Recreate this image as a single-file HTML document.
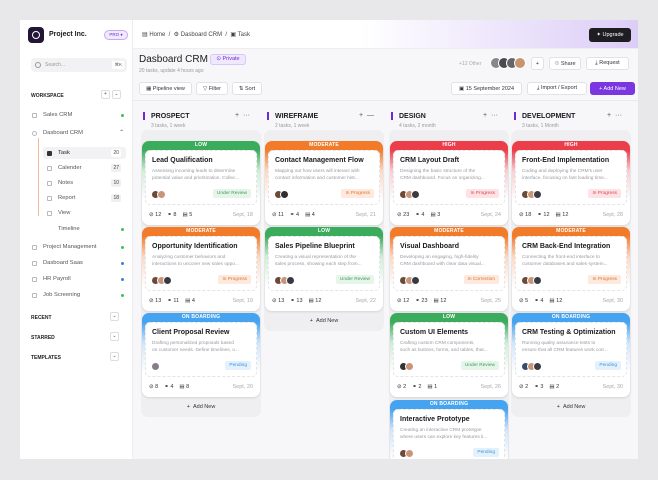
<!DOCTYPE html>
<html><head><meta charset="utf-8"><style>
*{box-sizing:border-box;margin:0;padding:0}
body{width:658px;height:480px;background:#e8e8eb;font-family:"Liberation Sans",sans-serif;position:relative;overflow:hidden;color:#1a1a1f}
.app{position:absolute;left:20px;top:20px;width:618px;height:439px;background:#fff;overflow:hidden}
.side{position:absolute;left:0;top:0;width:113px;height:439px;background:#fff;border-right:1px solid #ececef}
.main{position:absolute;left:113px;top:0;width:505px;height:439px;background:#f7f7f9}
.abs{position:absolute}
.logo{left:8px;top:7px;width:16px;height:16px;border-radius:4px;background:#231536}
.row{position:absolute;left:12px;font-size:5.8px;color:#55555e;display:flex;align-items:center;width:92px}
.row .ic{width:5px;height:5px;border:1px solid #b8b8c0;border-radius:1px;margin-right:6px}
.dot{position:absolute;right:0;width:3px;height:3px;border-radius:50%}
.cnt{position:absolute;right:0;background:#f0f0f2;border-radius:2px;font-size:5px;padding:1px 2px;color:#444}
.sec{position:absolute;left:11px;font-size:5px;font-weight:bold;color:#222}
.box{position:absolute;width:9px;height:9px;border:1px solid #ddd;border-radius:2px;background:#fff;font-size:5px;text-align:center;line-height:7px;color:#555}
.btn{position:absolute;height:13px;border:1px solid #e2e2e6;border-radius:3px;background:#fff;font-size:5.5px;color:#333;display:flex;align-items:center;justify-content:center;gap:3px}
.colh{position:absolute;top:92px;font-size:7px;font-weight:bold;display:flex;align-items:center}
.colh i{display:inline-block;width:2px;height:8px;background:#6b2bd6;margin-right:6px}
.cols{position:absolute;top:103px;font-size:5px;color:#999}
.ch{position:absolute;top:92px;font-size:7px;color:#555}
.card{position:absolute;width:118px;border-radius:7px;padding:0 3px 0;box-shadow:0 1px 2px rgba(0,0,0,.12)}
.card .lb{height:9px;font-size:5px;font-weight:bold;color:#fff;text-align:center;line-height:9px;letter-spacing:.2px}
.in{background:#fff;border-radius:5px;border:1px dashed #e4e4e8;padding:6px 6px 4px;height:55px;position:relative}
.in b{display:block;font-size:7px;margin-bottom:4px}
.in p{font-size:4.8px;color:#9a9aa2;line-height:7px;white-space:nowrap;overflow:hidden;text-overflow:ellipsis}
.av{position:absolute;left:5px;bottom:5px;display:flex}
.av span{width:9px;height:9px;border-radius:50%;border:1px solid #fff;margin-right:-3px;background:#6b4a3a}
.av span:nth-child(2){background:#c99478}.av span:nth-child(3){background:#3a3a44}
.pill{position:absolute;right:5px;bottom:6px;font-size:4.8px;padding:2px 4px;border-radius:2px}
.ur{background:#e6f5ea;color:#3d9a57}.ip{background:#fde9dd;color:#e5702a}.pd{background:#e3f1fd;color:#3b94e0}
.ft{display:flex;font-size:5.5px;color:#333;padding:0 4px;height:20px;align-items:center;background:#fff;gap:6px;border-radius:0 0 5px 5px}
.ft .d{margin-left:auto;color:#aaa}
.low{background:linear-gradient(#3bab5c 0,#3bab5c 9px,#cfeed8 30px,#fff 60px)}
.mod{background:linear-gradient(#f27b2a 0,#f27b2a 9px,#fcd9c2 30px,#fff 60px)}
.high{background:linear-gradient(#ec3d4b 0,#ec3d4b 9px,#f9cfd2 30px,#fff 60px)}
.onb{background:linear-gradient(#45a3ef 0,#45a3ef 9px,#cfe6fb 30px,#fff 60px)}
.add{position:absolute;font-size:5.5px;color:#333;width:118px;text-align:center}
</style></head><body>
<div class="app">
<div class="side">
 <div class="abs logo"><div style="position:absolute;left:4px;top:4px;width:8px;height:8px;border:1.5px solid #fff;border-radius:50%"></div></div>
 <div class="abs" style="left:29px;top:11px;font-size:7px;font-weight:bold">Project Inc.</div>
 <div class="abs" style="left:84px;top:10px;width:24px;height:10px;border:1px solid #c6a9f5;background:#f1e9fe;border-radius:5px;font-size:4.5px;color:#6b2bd6;text-align:center;line-height:8px">PRO ♦</div>
 <div class="abs" style="left:11px;top:38px;width:96px;height:14px;background:#f2f2f4;border-radius:4px;font-size:5px;color:#999;line-height:14px;padding-left:14px">Search...<span style="position:absolute;right:3px;top:3px;background:#fff;height:8px;line-height:8px;padding:0 2px;font-size:4.5px;color:#555">⌘K</span><span style="position:absolute;left:4px;top:4px;width:6px;height:6px;border:1px solid #999;border-radius:50%"></span></div>
 <div class="sec" style="top:73px">WORKSPACE</div>
 <div class="box" style="left:81px;top:70px">+</div><div class="box" style="left:92px;top:70px">⌄</div>
 <div class="row" style="top:92px"><span class="ic"></span>Sales CRM<span class="dot" style="background:#3bc35a"></span></div>
 <div class="row" style="top:110px"><span class="ic" style="border-radius:50%"></span>Dasboard CRM<span style="position:absolute;right:0">⌃</span></div>
 <div class="abs" style="left:18px;top:118px;width:1px;height:78px;background:#f0b99a"></div>
 <div class="abs" style="left:23px;top:127px;width:83px;height:12px;background:#f2f2f4;border-radius:3px"></div>
 <div class="row" style="top:130px;left:27px;width:74px;color:#222"><span class="ic" style="background:#333;border-color:#333"></span>Task<span class="cnt" style="top:-1px;background:#fff">20</span></div>
 <div class="row" style="top:145px;left:27px;width:74px"><span class="ic"></span>Calender<span class="cnt" style="top:-1px">27</span></div>
 <div class="row" style="top:160px;left:27px;width:74px"><span class="ic"></span>Notes<span class="cnt" style="top:-1px">10</span></div>
 <div class="row" style="top:175px;left:27px;width:74px"><span class="ic"></span>Report<span class="cnt" style="top:-1px">18</span></div>
 <div class="row" style="top:190px;left:27px;width:74px"><span class="ic"></span>View</div>
 <div class="row" style="top:206px;left:38px;width:66px">Timeline<span class="dot" style="background:#3bc35a"></span></div>
 <div class="row" style="top:224px"><span class="ic"></span>Project Management<span class="dot" style="background:#3bc35a"></span></div>
 <div class="row" style="top:240px"><span class="ic"></span>Dasboard Saas<span class="dot" style="background:#3b7fe0"></span></div>
 <div class="row" style="top:256px"><span class="ic"></span>HR Payroll<span class="dot" style="background:#3b7fe0"></span></div>
 <div class="row" style="top:272px"><span class="ic"></span>Job Screening<span class="dot" style="background:#3bc35a"></span></div>
 <div class="sec" style="top:295px">RECENT</div><div class="box" style="left:90px;top:292px">⌄</div>
 <div class="sec" style="top:315px">STARRED</div><div class="box" style="left:90px;top:312px">⌄</div>
 <div class="sec" style="top:335px">TEMPLATES</div><div class="box" style="left:90px;top:332px">⌄</div>
</div>
<div class="main">
 <div class="abs" style="left:0;top:0;width:505px;height:29px;background:linear-gradient(90deg,#fff 0,#fff 45%,#ece4fb 75%,#dccdf7 100%);border-bottom:1px solid #eee"></div>
 <div class="abs" style="left:9px;top:11px;font-size:6px;color:#444">▤ Home &nbsp;/&nbsp; ⚙ Dasboard CRM &nbsp;/&nbsp; ▣ Task</div>
 <div class="abs" style="left:456px;top:8px;width:42px;height:14px;background:#1d1d22;border-radius:3px;color:#fff;font-size:5.5px;text-align:center;line-height:14px">✦ Upgrade</div>
 <div class="abs" style="left:6px;top:34px;font-size:10px">Dasboard CRM</div>
 <div class="abs" style="left:77px;top:34px;width:36px;height:11px;background:#f0e8fd;border:1px solid #d9c6fa;border-radius:3px;color:#6b2bd6;font-size:5.5px;text-align:center;line-height:9px">⊙ Private</div>
 <div class="abs" style="left:6px;top:48px;font-size:5px;color:#999">20 tasks, update 4 hours ago</div>
 <div class="abs" style="left:326px;top:41px;font-size:5px;color:#aaa">+12 Other</div>
 <div class="abs" style="left:357px;top:37px;display:flex"><span style="width:12px;height:12px;border-radius:50%;background:#888;border:1px solid #fff"></span><span style="width:12px;height:12px;border-radius:50%;background:#4a4a52;border:1px solid #fff;margin-left:-4px"></span><span style="width:12px;height:12px;border-radius:50%;background:#666;border:1px solid #fff;margin-left:-4px"></span><span style="width:12px;height:12px;border-radius:50%;background:#c7966f;border:1px solid #fff;margin-left:-4px"></span></div>
 <div class="btn" style="left:398px;top:37px;width:13px">+</div>
 <div class="btn" style="left:416px;top:37px;width:32px">♲ Share</div>
 <div class="btn" style="left:453px;top:37px;width:43px">⤓ Request</div>
 <div class="btn" style="left:6px;top:62px;width:53px">▦ Pipeline view</div>
 <div class="btn" style="left:63px;top:62px;width:32px">▽ Filter</div>
 <div class="btn" style="left:99px;top:62px;width:30px">⇅ Sort</div>
 <div class="btn" style="left:318px;top:62px;width:71px">▣ 15 September 2024</div>
 <div class="btn" style="left:394px;top:62px;width:60px">⤓ Import / Export</div>
 <div class="btn" style="left:457px;top:62px;width:45px;background:#7a36e0;border-color:#7a36e0;color:#fff">+ Add New</div>
 <div class="btn" style="left:505px;top:62px;width:11px">⋮</div>
 <div class="abs" style="left:0;top:80px;width:505px;height:1px;background:#eaeaed"></div>
</div>
<div class="abs" style="left:121px;top:110px;width:120px;height:287px;background:#efeff2;border-radius:7px"></div>
<div class="abs" style="left:244px;top:110px;width:120px;height:201px;background:#efeff2;border-radius:7px"></div>
<div class="abs" style="left:369px;top:110px;width:120px;height:340px;background:#efeff2;border-radius:7px"></div>
<div class="abs" style="left:491px;top:110px;width:120px;height:287px;background:#efeff2;border-radius:7px"></div>

<div class="colh" style="left:123px"><i></i>PROSPECT</div><div class="ch" style="left:215px">+ &nbsp;···</div><div class="cols" style="left:131px">3 tasks, 1 week</div>
<div class="colh" style="left:247px"><i></i>WIREFRAME</div><div class="ch" style="left:339px">+ &nbsp;—</div><div class="cols" style="left:255px">2 tasks, 1 week</div>
<div class="colh" style="left:371px"><i></i>DESIGN</div><div class="ch" style="left:463px">+ &nbsp;···</div><div class="cols" style="left:379px">4 tasks, 2 month</div>
<div class="colh" style="left:494px"><i></i>DEVELOPMENT</div><div class="ch" style="left:587px">+ &nbsp;···</div><div class="cols" style="left:502px">3 tasks, 1 Month</div>

<div class="card low" style="left:122px;top:121px"><div class="lb">LOW</div><div class="in"><b>Lead Qualification</b><p>Assessing incoming leads to determine</p><p>potential value and prioritization. Collec...</p><div class="av"><span></span><span></span></div><div class="pill ur">Under Review</div></div><div class="ft">⊘ 12 <span>⚭ 8</span><span>▤ 5</span><span class="d">Sept, 18</span></div></div>
<div class="card mod" style="left:122px;top:207px"><div class="lb">MODERATE</div><div class="in"><b>Opportunity Identification</b><p>Analyzing customer behaviors and</p><p>interactions to uncover new sales oppo...</p><div class="av"><span></span><span></span><span></span></div><div class="pill ip">In Progress</div></div><div class="ft">⊘ 13 <span>⚭ 11</span><span>▤ 4</span><span class="d">Sept, 19</span></div></div>
<div class="card onb" style="left:122px;top:293px"><div class="lb">ON BOARDING</div><div class="in"><b>Client Proposal Review</b><p>Drafting personalized proposals based</p><p>on customer needs. Define timelines, o...</p><div class="av"><span style="background:#8a7b8a"></span></div><div class="pill pd">Pending</div></div><div class="ft">⊘ 8 <span>⚭ 4</span><span>▤ 8</span><span class="d">Sept, 20</span></div></div>
<div class="add" style="left:122px;top:384px">+ &nbsp;Add New</div>

<div class="card mod" style="left:245px;top:121px"><div class="lb">MODERATE</div><div class="in"><b>Contact Management Flow</b><p>Mapping out how users will interact with</p><p>contact information and customer hist...</p><div class="av"><span></span><span style="background:#2e2e33"></span></div><div class="pill ip">In Progress</div></div><div class="ft">⊘ 11 <span>⚭ 4</span><span>▤ 4</span><span class="d">Sept, 21</span></div></div>
<div class="card low" style="left:245px;top:207px"><div class="lb">LOW</div><div class="in"><b>Sales Pipeline Blueprint</b><p>Creating a visual representation of the</p><p>sales process, showing each step from...</p><div class="av"><span></span><span></span><span></span></div><div class="pill ur">Under Review</div></div><div class="ft">⊘ 13 <span>⚭ 13</span><span>▤ 12</span><span class="d">Sept, 22</span></div></div>
<div class="add" style="left:245px;top:298px">+ &nbsp;Add New</div>

<div class="card high" style="left:370px;top:121px"><div class="lb">HIGH</div><div class="in"><b>CRM Layout Draft</b><p>Designing the basic structure of the</p><p>CRM dashboard. Focus on organizing...</p><div class="av"><span></span><span></span><span></span></div><div class="pill ip" style="background:#fde3e5;color:#e0404d">In Progress</div></div><div class="ft">⊘ 23 <span>⚭ 4</span><span>▤ 3</span><span class="d">Sept, 24</span></div></div>
<div class="card mod" style="left:370px;top:207px"><div class="lb">MODERATE</div><div class="in"><b>Visual Dashboard</b><p>Developing an engaging, high-fidelity</p><p>CRM dashboard with clear data visual...</p><div class="av"><span></span><span></span><span></span></div><div class="pill ip">In Correction</div></div><div class="ft">⊘ 12 <span>⚭ 23</span><span>▤ 12</span><span class="d">Sept, 25</span></div></div>
<div class="card low" style="left:370px;top:293px"><div class="lb">LOW</div><div class="in"><b>Custom UI Elements</b><p>Crafting custom CRM components,</p><p>such as buttons, forms, and tables, that...</p><div class="av"><span style="background:#333"></span><span></span></div><div class="pill ur">Under Review</div></div><div class="ft">⊘ 2 <span>⚭ 2</span><span>▤ 1</span><span class="d">Sept, 26</span></div></div>
<div class="card onb" style="left:370px;top:380px"><div class="lb">ON BOARDING</div><div class="in"><b>Interactive Prototype</b><p>Creating an interactive CRM prototype</p><p>where users can explore key features li...</p><div class="av"><span></span><span></span></div><div class="pill pd">Pending</div></div></div>

<div class="card high" style="left:492px;top:121px"><div class="lb">HIGH</div><div class="in"><b>Front-End Implementation</b><p>Coding and deploying the CRM's user</p><p>interface, focusing on fast loading time...</p><div class="av"><span></span><span></span><span></span></div><div class="pill ip" style="background:#fde3e5;color:#e0404d">In Progress</div></div><div class="ft">⊘ 18 <span>⚭ 12</span><span>▤ 12</span><span class="d">Sept, 28</span></div></div>
<div class="card mod" style="left:492px;top:207px"><div class="lb">MODERATE</div><div class="in"><b>CRM Back-End Integration</b><p>Connecting the front-end interface to</p><p>customer databases and sales system...</p><div class="av"><span></span><span></span><span></span></div><div class="pill ip">In Progress</div></div><div class="ft">⊘ 5 <span>⚭ 4</span><span>▤ 12</span><span class="d">Sept, 30</span></div></div>
<div class="card onb" style="left:492px;top:293px"><div class="lb">ON BOARDING</div><div class="in"><b>CRM Testing &amp; Optimization</b><p>Running quality assurance tests to</p><p>ensure that all CRM features work corr...</p><div class="av"><span style="background:#3a4a6a"></span><span></span><span></span></div><div class="pill pd">Pending</div></div><div class="ft">⊘ 2 <span>⚭ 3</span><span>▤ 2</span><span class="d">Sept, 30</span></div></div>
<div class="add" style="left:492px;top:384px">+ &nbsp;Add New</div>
</div>
</body></html>
